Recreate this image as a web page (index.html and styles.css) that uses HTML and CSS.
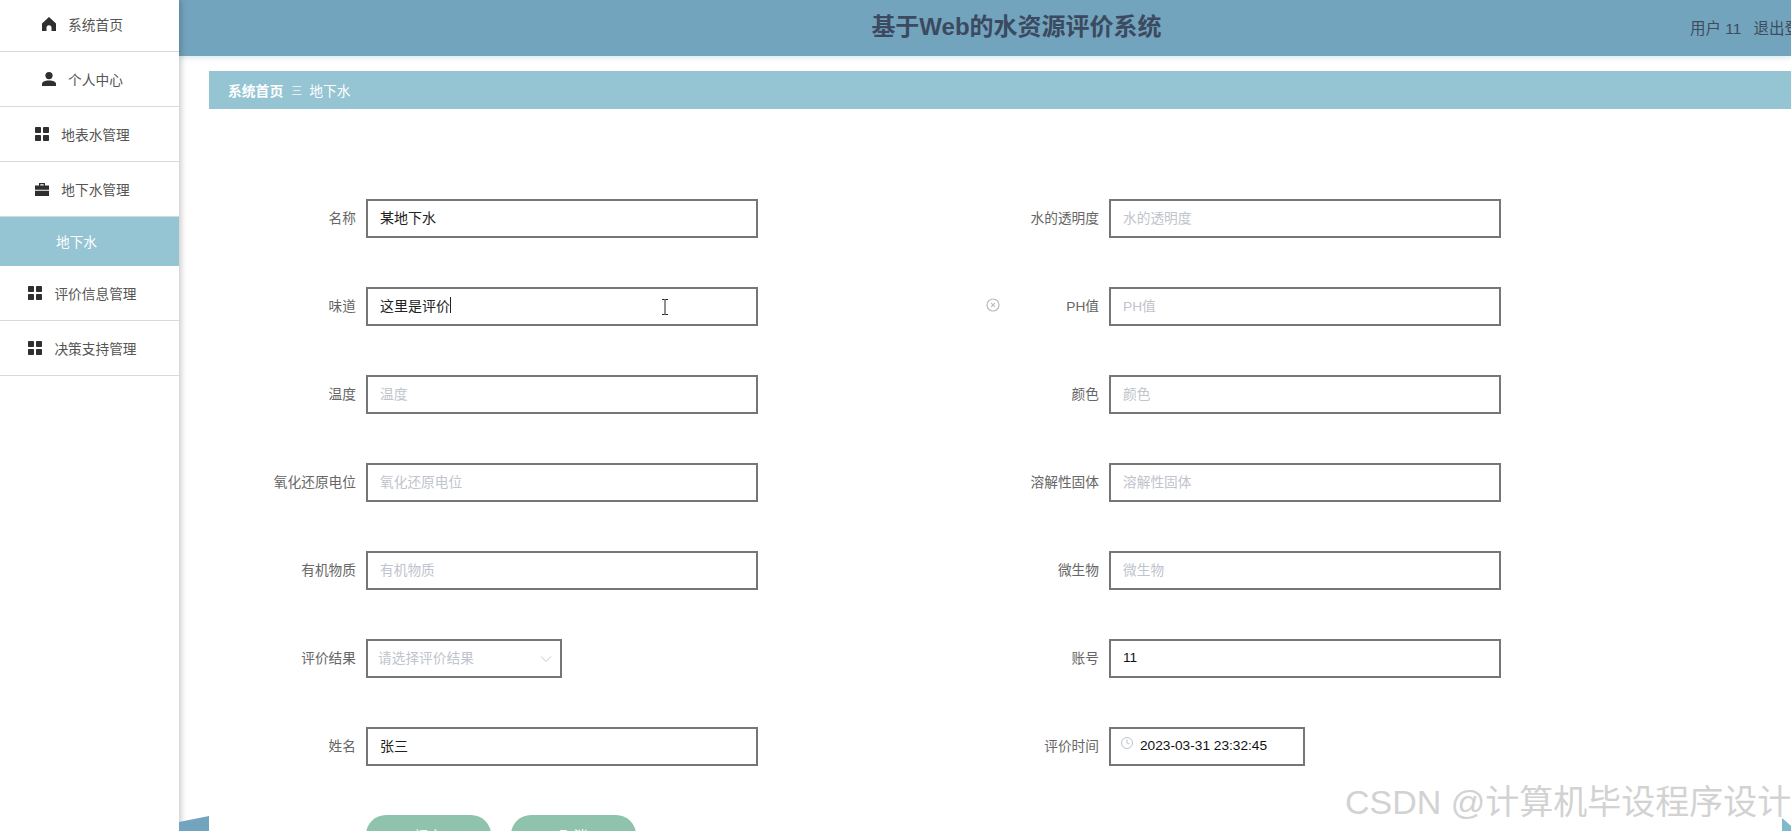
FILE: index.html
```html
<!DOCTYPE html>
<html lang="zh-CN">
<head>
<meta charset="utf-8">
<title>基于Web的水资源评价系统</title>
<link rel="stylesheet" href="styles.css">
</head>
<body>
<div class="app">
  <aside class="sidebar">
    <a class="nav-item"><svg class="ic" viewBox="1 1 14 14"><path d="M8 1 1 7.500V15h4.500v-3.300a2.500 2.500 0 0 1 5 0V15H15V7.500z"/></svg><span>系统首页</span></a>
    <a class="nav-item"><svg class="ic" viewBox="1 1 14 14"><circle cx="8" cy="4.600" r="3.600"/><path d="M1 15v-2c0-2.200 2.600-3.600 7-3.600s7 1.400 7 3.600v2z"/></svg><span>个人中心</span></a>
    <a class="nav-item"><svg class="ic" viewBox="1 1 14 14"><rect x="1" y="1" width="6" height="6" rx=".8"/><rect x="9" y="1" width="6" height="6" rx=".8"/><rect x="1" y="9" width="6" height="6" rx=".8"/><rect x="9" y="9" width="6" height="6" rx=".8"/></svg><span>地表水管理</span></a>
    <a class="nav-item"><svg class="ic" viewBox="1 1 14 14"><path d="M5 5V2h6v3H9.700V3.300H6.300V5zM1 4.500h14v4.300H1zM1 9.700h14V15H1z"/></svg><span>地下水管理</span></a>
    <a class="nav-sub">地下水</a>
    <a class="nav-item"><svg class="ic" viewBox="1 1 14 14"><rect x="1" y="1" width="6" height="6" rx=".8"/><rect x="9" y="1" width="6" height="6" rx=".8"/><rect x="1" y="9" width="6" height="6" rx=".8"/><rect x="9" y="9" width="6" height="6" rx=".8"/></svg><span>评价信息管理</span></a>
    <a class="nav-item"><svg class="ic" viewBox="1 1 14 14"><rect x="1" y="1" width="6" height="6" rx=".8"/><rect x="9" y="1" width="6" height="6" rx=".8"/><rect x="1" y="9" width="6" height="6" rx=".8"/><rect x="9" y="9" width="6" height="6" rx=".8"/></svg><span>决策支持管理</span></a>
  </aside>
  <div class="main">
    <header class="topbar">
      <h1 class="title">基于Web的水资源评价系统</h1>
      <div class="user"><span>用户 11</span><span>退出登录</span></div>
    </header>
    <nav class="crumb"><span class="crumb-home">系统首页</span><span class="crumb-sep">三</span><span>地下水</span></nav>
    <form class="form">
      <div class="field"><label class="lab">名称</label><div class="box val">某地下水</div></div>
      <div class="field"><label class="lab">水的透明度</label><div class="box ph">水的透明度</div></div>
      <div class="field"><label class="lab">味道</label><div class="box val">这里是评价<i class="caret"></i>
        <svg class="ibeam" viewBox="0 0 8 16"><path d="M1 .5h2.500L4 1l.5-.5H7M4 1v14M1 15.500h2.500L4 15l.5.500H7"/></svg></div>
        <svg class="clear" viewBox="0 0 14 14"><circle cx="7" cy="7" r="6"/><path d="m5.200 5.200 3.600 3.600m0-3.600-3.600 3.600"/></svg></div>
      <div class="field"><label class="lab">PH值</label><div class="box ph">PH值</div></div>
      <div class="field"><label class="lab">温度</label><div class="box ph">温度</div></div>
      <div class="field"><label class="lab">颜色</label><div class="box ph">颜色</div></div>
      <div class="field"><label class="lab">氧化还原电位</label><div class="box ph">氧化还原电位</div></div>
      <div class="field"><label class="lab">溶解性固体</label><div class="box ph">溶解性固体</div></div>
      <div class="field"><label class="lab">有机物质</label><div class="box ph">有机物质</div></div>
      <div class="field"><label class="lab">微生物</label><div class="box ph">微生物</div></div>
      <div class="field"><label class="lab">评价结果</label><div class="box ph short sel">请选择评价结果<svg class="chev" viewBox="0 0 12 8"><path d="m1 1.500 5 5 5-5"/></svg></div></div>
      <div class="field"><label class="lab">账号</label><div class="box val num">11</div></div>
      <div class="field"><label class="lab">姓名</label><div class="box val">张三</div></div>
      <div class="field"><label class="lab">评价时间</label><div class="box val num short date"><svg class="clock" viewBox="0 0 14 14"><circle cx="7" cy="7" r="5.500"/><path d="M7 3.500V7l2.500 1"/></svg>2023-03-31 23:32:45</div></div>
      <div class="actions"><button type="button" class="btn">提交</button><button type="button" class="btn">取消</button></div>
    </form>
  </div>
</div>
<div class="corner-left"></div>
<div class="corner-right"></div>
<div class="watermark">CSDN @计算机毕设程序设计</div>
</body>
</html>
```
FILE: styles.css
```css
* { box-sizing: border-box; }
html, body { margin: 0; height: 100%; overflow: hidden; background: #fff; }
body { font-family: "Liberation Sans", "Noto Sans CJK SC", sans-serif; color: #333; }
.app { display: flex; height: 831px; width: 1791px; overflow: hidden; }
.sidebar { width: 179px; flex: none; background: #fff; box-shadow: 2px 0 6px rgba(0,0,0,.22); position: relative; z-index: 2; }
.nav-item { display: flex; align-items: center; justify-content: center; gap: 12px; height: 55px; padding-right: 14px; border-bottom: 1px solid #d9d9d9; font-size: 13.700px; color: #555; }
.nav-item:first-child { height: 52px; padding-bottom: 4px; }
.ic { width: 14px; height: 14px; fill: #2f2f2f; flex: none; }
.nav-sub { display: flex; align-items: center; justify-content: center; height: 49px; padding-right: 26px; padding-bottom: 1px; background: #95c4d3; color: #fff; font-size: 13.700px; }
.main { flex: 1; min-width: 0; }
.topbar { height: 56px; background: #73a4bd; display: flex; align-items: center; justify-content: center; position: relative; box-shadow: 0 2px 5px rgba(115,164,189,.25); }
.title { margin: 0 0 7px 63px; font-size: 24px; font-weight: 700; color: #3b4a60; }
.user { position: absolute; right: 0; top: 16px; display: flex; gap: 12px; width: 101px; overflow: hidden; white-space: nowrap; font-size: 15.500px; color: #3e4c5e; }
.crumb { display: flex; align-items: center; margin: 15px 0 0 30px; height: 38px; padding-left: 19px; background: #95c4d3; color: #fff; font-size: 13.800px; }
.crumb-home { font-weight: 700; }
.crumb-sep { margin: 0 7px 0 8px; font-size: 11px; font-weight: 400; opacity: .9; }
.form { display: grid; grid-template-columns: 743px 1fr; row-gap: 49px; margin: 90px 0 0 0; }
.field { display: flex; align-items: center; height: 39px; position: relative; }
.lab { width: 187px; padding: 0 10px 4px 0; text-align: right; font-size: 13.700px; color: #666; flex: none; }
.box { width: 392px; height: 39px; display: flex; align-items: center; padding: 0 0 3px 12px; border: 2px solid #767676; font-size: 14px; position: relative; background: #fff; }
.val { color: #222; }
.ph { color: #c0c4cc; font-size: 13.700px; }
.num { font-size: 13.700px; color: #111; }
.short { width: 196px; }
.sel { padding-left: 10px; }
.chev { position: absolute; right: 8px; top: 14px; width: 12px; height: 8px; fill: none; stroke: #c0c4cc; stroke-width: 1; }
.date { padding-left: 9px; }
.clock { width: 14px; height: 14px; margin: -4px 6px 0 0; fill: none; stroke: #c0c4cc; stroke-width: 1; flex: none; }
.caret { width: 1px; height: 16px; background: #222; display: block; }
.ibeam { position: absolute; left: 293px; top: 10px; width: 8px; height: 16px; fill: none; stroke: #222; stroke-width: 1; }
.clear { position: absolute; left: 807px; top: 11px; width: 14px; height: 14px; fill: none; stroke: #bcbcbc; stroke-width: 1.200; }
.actions { grid-column: 1 / -1; display: flex; gap: 20px; padding-left: 187px; }
.btn { width: 125px; height: 40px; border: 0; border-radius: 20px; background: #8fc3ad; color: #fff; font: 14px "Liberation Sans", "Noto Sans CJK SC", sans-serif; }
.corner-left { position: absolute; left: 179px; top: 816px; width: 30px; height: 15px; background: #73a4bd; clip-path: polygon(0 6px, 100% 0, 100% 100%, 0 100%); z-index: 3; }
.corner-right { position: absolute; right: 0; bottom: 0; width: 9px; height: 13px; background: #7fb9cb; clip-path: polygon(0 0, 100% 60%, 100% 100%, 0 100%); }
.watermark { position: absolute; left: 1345px; top: 782px; white-space: nowrap; font-size: 34px; line-height: 40px; color: #d2d2d2; font-family: "Liberation Sans", "Noto Sans CJK SC", sans-serif; z-index: 4; }
```
